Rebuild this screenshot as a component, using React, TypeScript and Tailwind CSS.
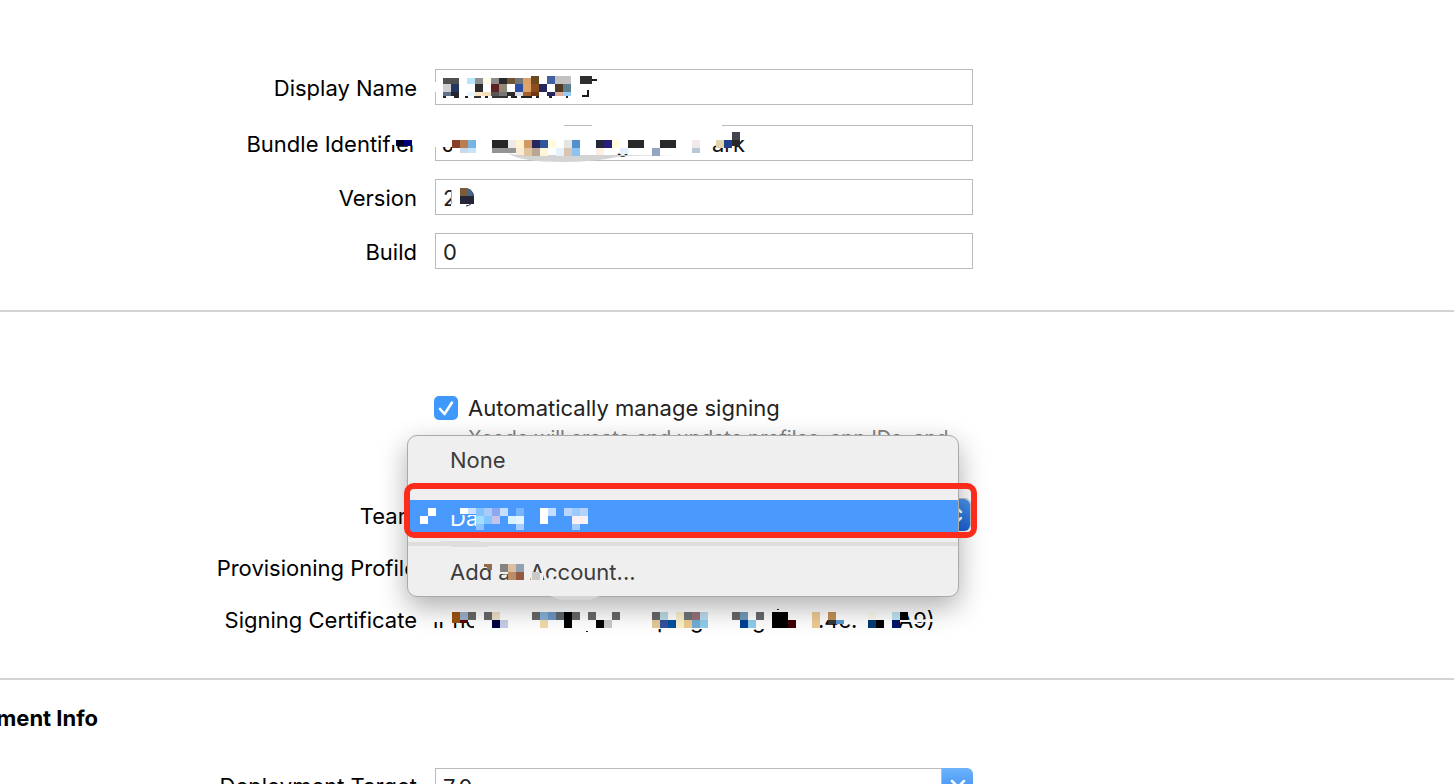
import type { ReactNode } from "react";

type Block = [x: number, y: number, w: number, h: number, color: string];

/* Pixelated cover drawn over private values. `box` is the viewBox of the covered row. */
function Mosaic({
  box,
  className,
  blocks,
  children,
}: {
  box: string;
  className: string;
  blocks: Block[];
  children?: ReactNode;
}) {
  return (
    <svg
      viewBox={box}
      aria-hidden="true"
      className={"pointer-events-none absolute left-0 top-0 overflow-visible " + className}
    >
      {children}
      <g shapeRendering="crispEdges">
        {blocks.map(([x, y, w, h, color], i) => (
          <rect key={i} x={x} y={y} width={w} height={h} fill={color} />
        ))}
      </g>
    </svg>
  );
}

const nameBlocks: Block[] = [
  [443, 78, 16, 6, "#505050"], [467, 78, 8, 6, "#b9e4fb"], [475, 78, 8, 6, "#909090"], [483, 78, 8, 6, "#fffbe6"],
  [491, 78, 8, 6, "#8c8c8c"], [499, 78, 8, 6, "#2a2a2a"], [507, 78, 8, 6, "#6e5535"], [515, 78, 8, 6, "#777777"],
  [523, 78, 8, 6, "#dda066"], [531, 76, 8, 8, "#6b4a22"], [547, 76, 8, 8, "#4560a0"], [555, 76, 16, 8, "#c2c2c2"],
  [580, 76, 12, 8, "#2e2e2e"], [592, 79, 5, 2, "#1a1a1a"],
  [443, 84, 8, 8, "#cfd0d2"], [451, 84, 8, 8, "#23375f"], [475, 84, 8, 8, "#2d2d2d"], [491, 84, 8, 8, "#5f2222"],
  [499, 84, 8, 8, "#918878"], [515, 84, 8, 8, "#2b4fa3"], [523, 84, 8, 8, "#dfa46c"], [531, 84, 8, 8, "#8f4c1f"],
  [539, 84, 8, 8, "#26265e"], [555, 84, 8, 8, "#503a22"], [563, 84, 8, 8, "#5e7f8e"],
  [443, 92, 8, 4, "#5f7088"], [451, 92, 8, 4, "#22262e"], [467, 92, 8, 4, "#e6f6fc"], [475, 92, 8, 4, "#ffe4c2"],
  [483, 92, 8, 4, "#f2ddba"], [491, 92, 8, 4, "#555555"], [499, 92, 8, 4, "#777777"], [507, 92, 8, 4, "#2a2a2a"],
  [515, 92, 8, 4, "#dadfe8"], [523, 92, 8, 4, "#a15f2c"], [531, 92, 8, 4, "#703a16"], [547, 92, 8, 4, "#26265e"],
  [555, 92, 8, 4, "#dfae98"], [563, 92, 8, 4, "#93ccf5"],
  [443, 96, 3, 2, "#222222"], [454, 96, 5, 2, "#222222"], [465, 96, 3, 2, "#222222"], [474, 96, 7, 2, "#333333"],
  [485, 96, 3, 2, "#222222"], [492, 96, 16, 2, "#333333"], [511, 96, 6, 2, "#222222"], [521, 96, 11, 2, "#222222"],
  [536, 96, 3, 2, "#222222"], [549, 96, 3, 2, "#222222"], [566, 96, 2, 2, "#222222"],
];

const bundleBlocks: Block[] = [
  [452, 140, 8, 8, "#8a4028"], [460, 140, 8, 8, "#bb7d50"], [468, 140, 8, 8, "#78b4e0"], [492, 140, 16, 8, "#262626"],
  [508, 140, 8, 8, "#efe9ea"], [516, 140, 8, 8, "#fff3d2"], [524, 140, 8, 8, "#d09a64"], [532, 140, 8, 8, "#26265e"],
  [540, 140, 8, 8, "#2f559b"], [548, 140, 8, 8, "#fffbdc"], [564, 140, 8, 8, "#e5e5e5"], [572, 140, 8, 8, "#5291cb"],
  [596, 140, 8, 8, "#24263a"], [604, 140, 8, 8, "#26207a"], [612, 140, 8, 8, "#fffbdc"], [628, 140, 16, 8, "#282828"],
  [660, 140, 16, 8, "#282828"], [692, 140, 8, 8, "#f2eaea"], [716, 140, 8, 8, "#e0d6ac"], [724, 140, 8, 8, "#22408a"],
  [732, 132, 8, 8, "#454552"], [732, 140, 8, 6, "#282828"],
  [460, 148, 8, 5, "#c9d9ec"], [468, 148, 8, 5, "#c8e4fa"], [492, 148, 24, 5, "#949494"], [516, 148, 8, 7, "#f8ecd5"],
  [524, 148, 8, 8, "#dfc39e"], [532, 148, 8, 8, "#b8a793"], [540, 148, 8, 8, "#fff5d8"], [556, 148, 8, 8, "#e5f3fd"],
  [564, 148, 8, 8, "#d9c4b2"], [572, 148, 8, 8, "#8fc3f2"], [596, 148, 8, 7, "#fdefe2"], [620, 148, 8, 6, "#e0effb"],
  [652, 148, 8, 8, "#93a5c0"], [692, 148, 8, 5, "#b8c9d8"],
];

const certBlocks: Block[] = [
  [452, 612, 8, 11, "#9c5310"], [460, 612, 8, 8, "#9db0c8"], [468, 612, 8, 8, "#686868"], [484, 612, 8, 8, "#686868"],
  [492, 612, 8, 8, "#efe0c8"], [532, 612, 8, 8, "#686868"], [540, 612, 8, 8, "#85b3d9"], [548, 612, 8, 8, "#6f98c5"],
  [556, 612, 8, 8, "#5f6870"], [564, 612, 8, 16, "#000000"], [572, 612, 8, 8, "#686868"], [588, 612, 8, 8, "#686868"],
  [612, 612, 8, 8, "#686868"], [652, 612, 8, 8, "#686868"], [660, 612, 8, 8, "#bcdbe3"], [676, 612, 8, 16, "#faf2cc"],
  [684, 612, 8, 8, "#6d7578"], [692, 612, 8, 8, "#947478"], [700, 612, 8, 8, "#bcdcf0"], [732, 612, 8, 8, "#686868"],
  [740, 612, 8, 8, "#739bb9"], [756, 612, 8, 8, "#686870"], [772, 612, 16, 16, "#000000"], [812, 612, 8, 16, "#edcb93"],
  [828, 612, 8, 8, "#c29256"], [868, 612, 8, 8, "#fdfbee"], [892, 612, 8, 8, "#bde6f2"], [900, 612, 8, 8, "#000000"],
  [460, 620, 8, 3, "#5a0505"], [492, 620, 8, 8, "#000040"], [500, 620, 8, 8, "#c6cfe4"], [540, 620, 8, 8, "#f3dda8"],
  [596, 620, 8, 8, "#000000"], [604, 620, 8, 8, "#c9c9c9"], [652, 620, 8, 8, "#e3ca96"], [660, 620, 8, 8, "#35509f"],
  [668, 620, 8, 8, "#0052a0"], [684, 620, 8, 8, "#efcb90"], [692, 620, 8, 8, "#72aed5"], [700, 620, 8, 8, "#90cbee"],
  [740, 620, 8, 8, "#003f94"], [748, 620, 8, 8, "#90cbee"], [788, 620, 8, 8, "#420005"], [828, 620, 8, 4, "#36363e"],
  [836, 620, 8, 4, "#5a9bcf"], [868, 620, 8, 8, "#003c70"], [876, 620, 8, 8, "#000000"], [892, 620, 8, 8, "#00146a"],
  [586, 631, 2, 1, "#222222"], [777, 609, 2, 1, "#222222"],
];

const teamBlocks: Block[] = [
  [428, 508, 8, 8, "#ffffff"], [460, 508, 8, 6, "#ffffff"], [468, 508, 8, 6, "#c9e0ff"], [476, 508, 8, 8, "#83c2ff"],
  [484, 508, 8, 8, "#a8cbf8"], [492, 508, 8, 8, "#8da8ee"], [500, 508, 8, 8, "#c5deff"], [516, 508, 8, 8, "#77b5fb"],
  [540, 508, 8, 16, "#ffffff"], [548, 508, 8, 8, "#c5ddff"], [564, 508, 8, 8, "#b9d5fd"], [572, 508, 8, 8, "#9bcbff"],
  [580, 508, 8, 8, "#b5d3fa"], [420, 516, 8, 8, "#ffffff"], [476, 516, 8, 8, "#9fdcff"], [484, 516, 8, 8, "#82c6ff"],
  [492, 516, 8, 8, "#c6c3ea"], [508, 516, 8, 8, "#d5f4ff"], [516, 516, 8, 8, "#e5f5ff"], [572, 516, 16, 8, "#fbf0f2"],
  [476, 524, 8, 6, "#8cc2ff"], [516, 524, 8, 6, "#a8ccfb"], [572, 524, 8, 6, "#a4ccfb"],
];

const accountBlocks: Block[] = [
  [484, 564, 8, 3, "#946a48"], [487, 567, 5, 3, "#946a48"], [500, 564, 8, 8, "#858380"], [508, 564, 8, 8, "#dcbf9f"],
  [516, 564, 8, 8, "#94a0b0"], [508, 572, 8, 8, "#bb8c68"], [516, 572, 8, 8, "#94593f"], [532, 572, 8, 8, "#c9c9c9"],
];

const rowClass = "grid grid-cols-[417px_minmax(0,538px)] items-center gap-x-[18px]";
const labelClass = "whitespace-nowrap text-right text-black";
const inputClass = "block h-9 w-full border border-[#bababa] bg-white px-[7px] pt-0.5 text-[#222] outline-none";

function Field({
  id,
  label,
  value,
  labelCover,
  children,
}: {
  id: string;
  label: string;
  value: string;
  labelCover?: ReactNode;
  children?: ReactNode;
}) {
  return (
    <div className={rowClass}>
      <label htmlFor={id} className={labelClass + " relative pt-0.5 leading-[34px]"}>
        {label}
        {labelCover}
      </label>
      <div className="relative">
        <input id={id} type="text" defaultValue={value} className={inputClass} />
        {children}
      </div>
    </div>
  );
}

function Identity() {
  return (
    <section className="flex flex-col gap-[18px] border-b-2 border-[#d3d3d3] pb-[41px] pt-[69px]">
      <Field id="display-name" label="Display Name" value="">
        <Mosaic box="435 69 538 36" className="h-9 w-[538px]" blocks={nameBlocks}>
          <rect x="433" y="82" width="5" height="10" fill="#fff" />
          <path d="M588 90v6h-6" fill="none" stroke="#1a1a1a" strokeWidth="2" />
        </Mosaic>
      </Field>
      <div className="pt-0.5">
        <Field
          id="bundle-identifier"
          label="Bundle Identifier"
          value=""
          labelCover={
            <Mosaic
              box="0 126 417 36"
              className="h-9 w-[417px]"
              blocks={[
                [391, 130, 28, 16, "#ffffff"],
                [396, 141, 8, 6, "#000028"],
                [404, 141, 8, 6, "#00007a"],
              ]}
            />
          }
        >
          <Mosaic box="435 125 538 36" className="h-9 w-[538px]" blocks={bundleBlocks}>
            <g fill="#111" fontSize="22">
              <text x="442" y="152">J</text>
              <text x="616" y="152">g</text>
              <text x="712" y="152">ark</text>
            </g>
            <path d="M433 123H564V127H592V123H722V140L704 151H640V151H452V147H433Z" fill="#fff" />
            <path d="M564 125.500H592M722 125.500H740" stroke="#bababa" strokeWidth="1" />
            <path d="M508 153Q520 162 562 162Q596 162 622 156L680 155H516Z" fill="#d4d4d4" />
          </Mosaic>
        </Field>
      </div>
      <Field id="version" label="Version" value="2">
        <Mosaic box="435 179 538 36" className="h-9 w-[538px]" blocks={[]}>
          <rect x="451" y="186" width="8" height="20" fill="#fff" />
          <path d="M451.500 190v14" stroke="#aaa" strokeWidth="1" />
          <path d="M460 188h6q8 2 8 9v7h-14z" fill="#26263a" />
          <path d="M460 188h7v8h-7z" fill="#7b5b38" />
          <path d="M467 188q6 2 6 8h-6z" fill="#45688a" />
          <path d="M466 206q6-1 7-5" fill="none" stroke="#26263a" strokeWidth="1" />
        </Mosaic>
      </Field>
      <Field id="build" label="Build" value="0" />
    </section>
  );
}

function TeamMenu() {
  return (
    <div
      role="listbox"
      aria-label="Team"
      className="absolute -left-7 -top-[63px] z-10 flex h-[162px] w-[552px] flex-col rounded-[10px] border border-[#a9a9a9] bg-[#efefef] text-[#3c3c3c] shadow-[0_10px_28px_rgba(0,0,0,0.32)]"
    >
      <button type="button" role="option" aria-selected="false" className="h-12 pl-[42px] text-left">
        None
      </button>
      <button
        type="button"
        role="option"
        aria-selected="true"
        className="mt-4 h-8 bg-[#4a99fc] pl-[42px] text-left text-white"
      >
        Da
      </button>
      <div className="mt-2.5 h-1 bg-[#dedede]" />
      <button type="button" role="option" aria-selected="false" className="flex-1 pl-[42px] pt-0.5 text-left">
        Add an Account...
      </button>
      <Mosaic box="408 436 550 160" className="h-40 w-[550px]" blocks={teamBlocks}>
        <rect x="448" y="504" width="30" height="11" fill="#4a99fc" />
        <path d="M440 541H478L490 547H452Z" fill="#dedede" />
        <path d="M550 596H600L590 600H560Z" fill="#d3d3d3" />
      </Mosaic>
      <Mosaic box="408 436 550 160" className="h-40 w-[550px]" blocks={accountBlocks}>
        <path d="M492 560H529V582H510V574H492Z" fill="#efefef" />
        <path d="M531 573H543V583H531ZM550 574L558 584H546Z" fill="#efefef" />
      </Mosaic>
      <div className="pointer-events-none absolute -left-1 top-[47px] h-[55px] w-[573px] rounded-[10px] border-6 border-[#fc2c1d]" />
    </div>
  );
}

function Signing() {
  return (
    <section className="border-b-2 border-[#d3d3d3] pb-10 pt-[78px]">
      <div className={rowClass}>
        <div className="col-start-2 -ml-px">
          <div className="flex items-center gap-2.5">
            <span className="relative block size-6">
              <input
                id="auto-signing"
                type="checkbox"
                defaultChecked
                className="block size-6 appearance-none rounded-[5px] bg-[#3f99fb]"
              />
              <svg viewBox="0 0 24 24" className="pointer-events-none absolute inset-0 size-6" aria-hidden="true">
                <path d="M6 13l4.500 5L18 6.500" fill="none" stroke="#fff" strokeWidth="2.600" strokeLinecap="round" strokeLinejoin="round" />
              </svg>
            </span>
            <label htmlFor="auto-signing" className="whitespace-nowrap leading-9 text-[#222]">
              Automatically manage signing
            </label>
          </div>
          <p className="h-[72px] whitespace-nowrap pl-[34px] text-xl leading-6 text-[#808080]">
            Xcode will create and update profiles, app IDs, and
          </p>
        </div>
      </div>
      <div className="flex flex-col gap-4">
        <div className={rowClass}>
          <span className={labelClass}>Team</span>
          <div className="relative h-9">
            <button
              type="button"
              aria-label="Team"
              aria-haspopup="listbox"
              aria-expanded="true"
              className="flex h-[33px] w-[536px] justify-end rounded-md border border-[#c3c3c3] bg-white"
            >
              <span className="flex h-8 w-7 items-center justify-center rounded-r-md bg-linear-to-b from-[#4a94ee] to-[#1a63d8]">
                <svg viewBox="0 0 16 24" className="h-6 w-4" aria-hidden="true">
                  <path d="M3 9l5-5 5 5M3 15l5 5 5-5" fill="none" stroke="#fff" strokeWidth="2.500" strokeLinecap="round" />
                </svg>
              </span>
            </button>
            <TeamMenu />
          </div>
        </div>
        <div className={rowClass}>
          <span className={labelClass + " leading-9"}>Provisioning Profile</span>
        </div>
        <div className={rowClass}>
          <span className={labelClass + " leading-9"}>Signing Certificate</span>
          <div className="relative h-9">
            <Mosaic box="435 602 538 36" className="h-9 w-[538px]" blocks={certBlocks}>
              <g fill="#000" fontSize="22">
                <text x="433" y="628">iPhone</text>
                <text x="657" y="628">p</text>
                <text x="690" y="628">g</text>
                <text x="752" y="628">g</text>
                <text x="818" y="628">.4c.</text>
                <text x="898" y="628">A9)</text>
              </g>
              <path
                d="M430 604H900V620H898L934 619V622H898V628H862V620H818V629H640V629H474V622H430Z"
                fill="#fff"
              />
              <rect x="476" y="608" width="40" height="24" fill="#fff" />
            </Mosaic>
          </div>
        </div>
      </div>
    </section>
  );
}

function DeploymentInfo() {
  return (
    <section className="pt-5">
      <h2 className="flex w-[98px] justify-end whitespace-nowrap font-bold leading-9 text-black">Deployment Info</h2>
      <div className={rowClass + " mt-8"}>
        <label htmlFor="deployment-target" className={labelClass}>
          Deployment Target
        </label>
        <div className="flex">
          <input id="deployment-target" type="text" defaultValue="7.0" className={inputClass + " min-w-0 flex-1"} />
          <button
            type="button"
            aria-label="Choose deployment target"
            className="flex h-9 w-[31px] items-center justify-center rounded-r-md bg-linear-to-b from-[#6cb3fa] to-[#2a7ff5]"
          >
            <svg viewBox="0 0 16 16" className="size-4" aria-hidden="true">
              <path d="M2 3l6 6 6-6" fill="none" stroke="#fff" strokeWidth="2.500" strokeLinecap="round" />
            </svg>
          </button>
        </div>
      </div>
    </section>
  );
}

export default function App() {
  return (
    <main className="h-screen overflow-hidden bg-white font-['Inter','Liberation_Sans',sans-serif] text-[22px] leading-9">
      <Identity />
      <Signing />
      <DeploymentInfo />
    </main>
  );
}
